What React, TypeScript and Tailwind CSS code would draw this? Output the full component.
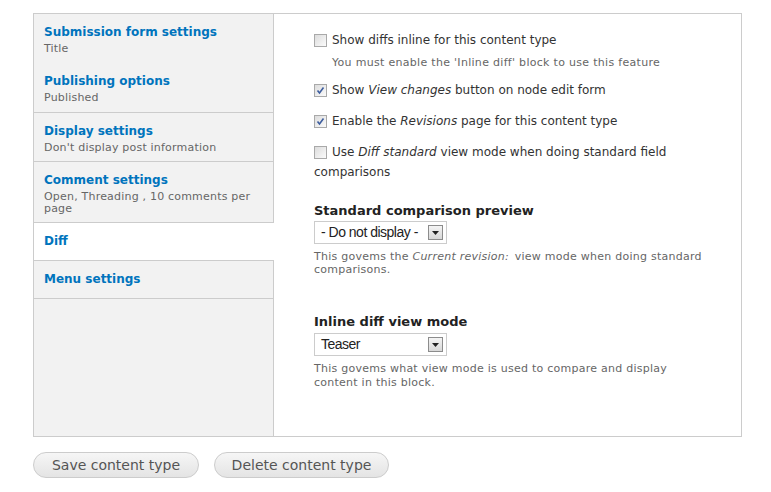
import React from 'react';

const font = { fontFamily: '"DejaVu Sans", Verdana, sans-serif' };

type Tab = { title: string; summary?: string; active?: boolean; border?: boolean; h: string };

const tabs: Tab[] = [
	{ title: 'Submission form settings', summary: 'Title', h: 'h-[49px]' },
	{ title: 'Publishing options', summary: 'Published', h: 'h-[49px]' },
	{ title: 'Display settings', summary: "Don't display post information", border: true, h: 'h-[49px]' },
	{ title: 'Comment settings', summary: 'Open, Threading , 10 comments per page', border: true, h: 'h-[61px]' },
	{ title: 'Diff', active: true, border: true, h: 'h-[38px]' },
	{ title: 'Menu settings', border: true, h: 'h-[38px]' },
];

const Checkbox = ({ checked }: { checked?: boolean }) => (
	<span className="inline-flex h-[13px] w-[13px] shrink-0 items-center justify-center border border-[#a9a9a9] bg-gradient-to-br from-[#dcdcdc] to-[#fbfbfb]">
		{checked && (
			<svg width="9" height="9" viewBox="0 0 9 9">
				<path d="M1.5 4.5 L3.5 7 L7.5 1.5" fill="none" stroke="#3d5d9e" strokeWidth="1.6" />
			</svg>
		)}
	</span>
);

const Select = ({ value }: { value: string }) => (
	<div className="flex h-[23px] w-[133px] items-center justify-between border border-[#ccc] bg-white pl-[6px] pr-[3px]">
		<span className="text-[14px] tracking-[-0.5px] text-[#222]" style={{ fontFamily: '"Liberation Sans", Arial, sans-serif' }}>
			{value}
		</span>
		<span className="flex h-[15px] w-[15px] items-center justify-center border border-[#8c8c8c] bg-gradient-to-b from-[#f4f4f4] to-[#d8d8d8]">
			<svg width="7" height="4" viewBox="0 0 7 4">
				<path d="M0 0 H7 L3.5 4 Z" fill="#222" />
			</svg>
		</span>
	</div>
);

export default function App() {
	return (
		<div className="min-h-[492px] w-[771px] bg-white pl-[33px] pt-[13px]" style={font}>
			<div className="flex h-[424px] w-[709px] border border-[#ccc]">
				<ul className="w-[240px] shrink-0 bg-[#f2f2f2]">
					{tabs.map((t) => (
						<li
							key={t.title}
							className={`${t.h} ${t.border ? 'border-t border-[#ccc]' : ''} ${t.active ? 'bg-white' : 'border-r border-r-[#ccc]'} px-[10px] pt-[10px]`}
						>
							<div className="text-[12px] font-bold leading-[16px] text-[#0074bd]">{t.title}</div>
							{t.summary && (
								<div className="mt-[3px] text-[11px] leading-[12px] tracking-[0.2px] text-[#666]">{t.summary}</div>
							)}
						</li>
					))}
					<li className="h-[138px] border-t border-r border-[#ccc]" />
				</ul>
				<div className="flex-1 pl-[40px] pt-[18px] text-[12px] text-[#333]">
					<div className="flex items-center gap-[5px] leading-[16px]">
						<Checkbox />
						<span>Show diffs inline for this content type</span>
					</div>
					<div className="mt-[8px] pl-[18px] text-[11px] leading-[14px] tracking-[0.3px] text-[#666]">
						You must enable the 'Inline diff' block to use this feature
					</div>
					<div className="mt-[12px] flex items-center gap-[5px] leading-[16px]">
						<Checkbox checked />
						<span>
							Show <em>View changes</em> button on node edit form
						</span>
					</div>
					<div className="mt-[15px] flex items-center gap-[5px] leading-[16px]">
						<Checkbox checked />
						<span>
							Enable the <em>Revisions</em> page for this content type
						</span>
					</div>
					<div className="mt-[15px] flex items-center gap-[5px] leading-[16px]">
						<Checkbox />
						<span>
							Use <em>Diff standard</em> view mode when doing standard field
						</span>
					</div>
					<div className="mt-[4px] leading-[16px]">comparisons</div>
					<div className="mt-[23px] text-[13px] font-bold leading-[16px] text-[#222]">Standard comparison preview</div>
					<div className="mt-[2px]">
						<Select value="- Do not display -" />
					</div>
					<div className="mt-[6px] w-[400px] text-[11px] leading-[13px] tracking-[0.25px] text-[#666]">
						This govems the <em className="pr-[2px]">Current revision:</em> view mode when doing standard comparisons.
					</div>
					<div className="mt-[38px] text-[13px] font-bold leading-[16px] text-[#222]">Inline diff view mode</div>
					<div className="mt-[3px]">
						<Select value="Teaser" />
					</div>
					<div className="mt-[6px] w-[400px] text-[11px] leading-[14px] tracking-[0.25px] text-[#666]">
						This govems what view mode is used to compare and display content in this block.
					</div>
				</div>
			</div>
			<div className="mt-[15px] flex gap-[15px]">
				<button className="h-[26px] w-[166px] rounded-full border border-[#ccc] bg-gradient-to-b from-[#f6f6f6] to-[#e4e4e4] text-[14px] text-[#555]">
					Save content type
				</button>
				<button className="h-[26px] w-[175px] rounded-full border border-[#ccc] bg-gradient-to-b from-[#f6f6f6] to-[#e4e4e4] text-[14px] text-[#555]">
					Delete content type
				</button>
			</div>
		</div>
	);
}
